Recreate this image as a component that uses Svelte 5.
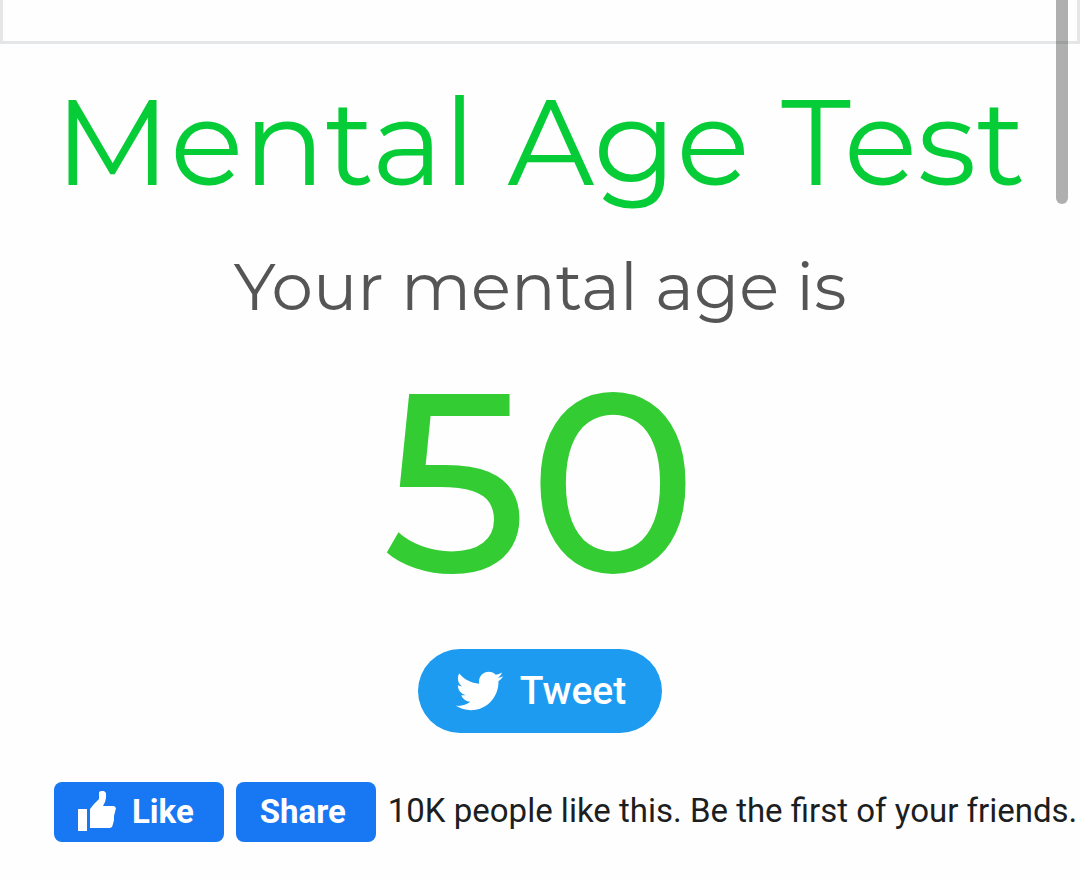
<script lang="ts">
  const age = 50;
  const likes = '10K';

  let liked = $state(false);
</script>

<div class="page">
  <div class="ad-frame"></div>
  <div class="scroll-thumb"></div>

  <main>
    <h1>Mental Age Test</h1>
    <p class="lead">Your mental age is</p>
    <p class="age">{age}</p>

    <a class="tweet" href="#tweet">
      <svg viewBox="0 0 24 24" aria-hidden="true">
        <path
          d="M23.643 4.937c-.835.37-1.732.62-2.675.733.962-.576 1.7-1.49 2.048-2.578-.9.534-1.897.922-2.958 1.13-.85-.904-2.06-1.47-3.4-1.47-2.572 0-4.658 2.086-4.658 4.66 0 .364.042.718.12 1.06-3.873-.195-7.304-2.05-9.602-4.868-.4.69-.63 1.49-.63 2.342 0 1.616.823 3.043 2.072 3.878-.764-.025-1.482-.234-2.11-.583v.06c0 2.257 1.605 4.14 3.737 4.568-.392.106-.803.162-1.227.162-.3 0-.593-.028-.877-.082.593 1.85 2.313 3.198 4.352 3.234-1.595 1.25-3.604 1.995-5.786 1.995-.376 0-.747-.022-1.112-.065 2.062 1.323 4.51 2.093 7.14 2.093 8.57 0 13.255-7.098 13.255-13.254 0-.2-.005-.402-.014-.602.91-.658 1.7-1.477 2.323-2.41z"
        />
      </svg>
      Tweet
    </a>
  </main>

  <div class="social">
    <button class="fb" aria-pressed={liked} onclick={() => (liked = !liked)}>
      <svg viewBox="0 0 40 40" aria-hidden="true">
        <path d="M0 18h9v22H0z" />
        <path d="M12 18l4-5 5-5V1l2-1h3l2 2v5l-1 4-2 4h11l2 2-1 4-1 4v4l-1 4-1 3-2 1H12z" />
      </svg>
      Like
    </button>
    <button class="fb">Share</button>
    <span class="count">{likes} people like this. Be the first of your friends.</span>
  </div>
</div>

<style>
  :global(body) {
    margin: 0;
    background: #fefefe;
  }
  .page {
    position: relative;
    overflow: hidden;
    font-family: Roboto, sans-serif;
  }
  .ad-frame {
    box-sizing: border-box;
    height: 44px;
    border: 3px solid #e5e6e7;
    border-top: 0;
  }
  .scroll-thumb {
    position: absolute;
    top: 0;
    right: 12px;
    width: 12px;
    height: 204px;
    border-radius: 0 0 6px 6px;
    background: rgba(0, 0, 0, 0.31);
  }
  main {
    display: flex;
    flex-direction: column;
    align-items: center;
    text-align: center;
  }
  h1,
  p {
    margin: 0;
    font-family: Montserrat, Inter, sans-serif;
    white-space: nowrap;
  }
  h1 {
    margin-top: 24px;
    font-size: 121px;
    font-weight: 400;
    line-height: 148px;
    color: #06cc38;
  }
  .lead {
    margin-top: 31px;
    font-size: 66px;
    font-weight: 400;
    line-height: 80px;
    color: #555;
  }
  .age {
    margin-top: 34px;
    font-size: 254px;
    font-weight: 500;
    line-height: 240px;
    color: #3c3;
  }
  .tweet {
    display: flex;
    align-items: center;
    gap: 16px;
    box-sizing: border-box;
    height: 84px;
    margin-top: 48px;
    padding: 0 36px;
    border-radius: 42px;
    background: #1d9bf0;
    color: #fff;
    font-size: 39px;
    font-weight: 500;
    text-decoration: none;
  }
  .tweet svg {
    width: 50px;
    height: 50px;
    fill: currentColor;
  }
  .social {
    display: flex;
    align-items: center;
    gap: 12px;
    margin-top: 49px;
    padding-left: 54px;
    white-space: nowrap;
  }
  .fb {
    display: flex;
    align-items: center;
    gap: 14px;
    height: 60px;
    padding: 0 30px 2px 24px;
    border: 0;
    border-radius: 8px;
    background: #1877f2;
    color: #fff;
    font-family: inherit;
    font-size: 33px;
    font-weight: 700;
    cursor: pointer;
  }
  .fb svg {
    width: 40px;
    height: 40px;
    fill: currentColor;
  }
  .count {
    padding-bottom: 4px;
    font-size: 33px;
    color: #1c1e21;
  }
</style>
